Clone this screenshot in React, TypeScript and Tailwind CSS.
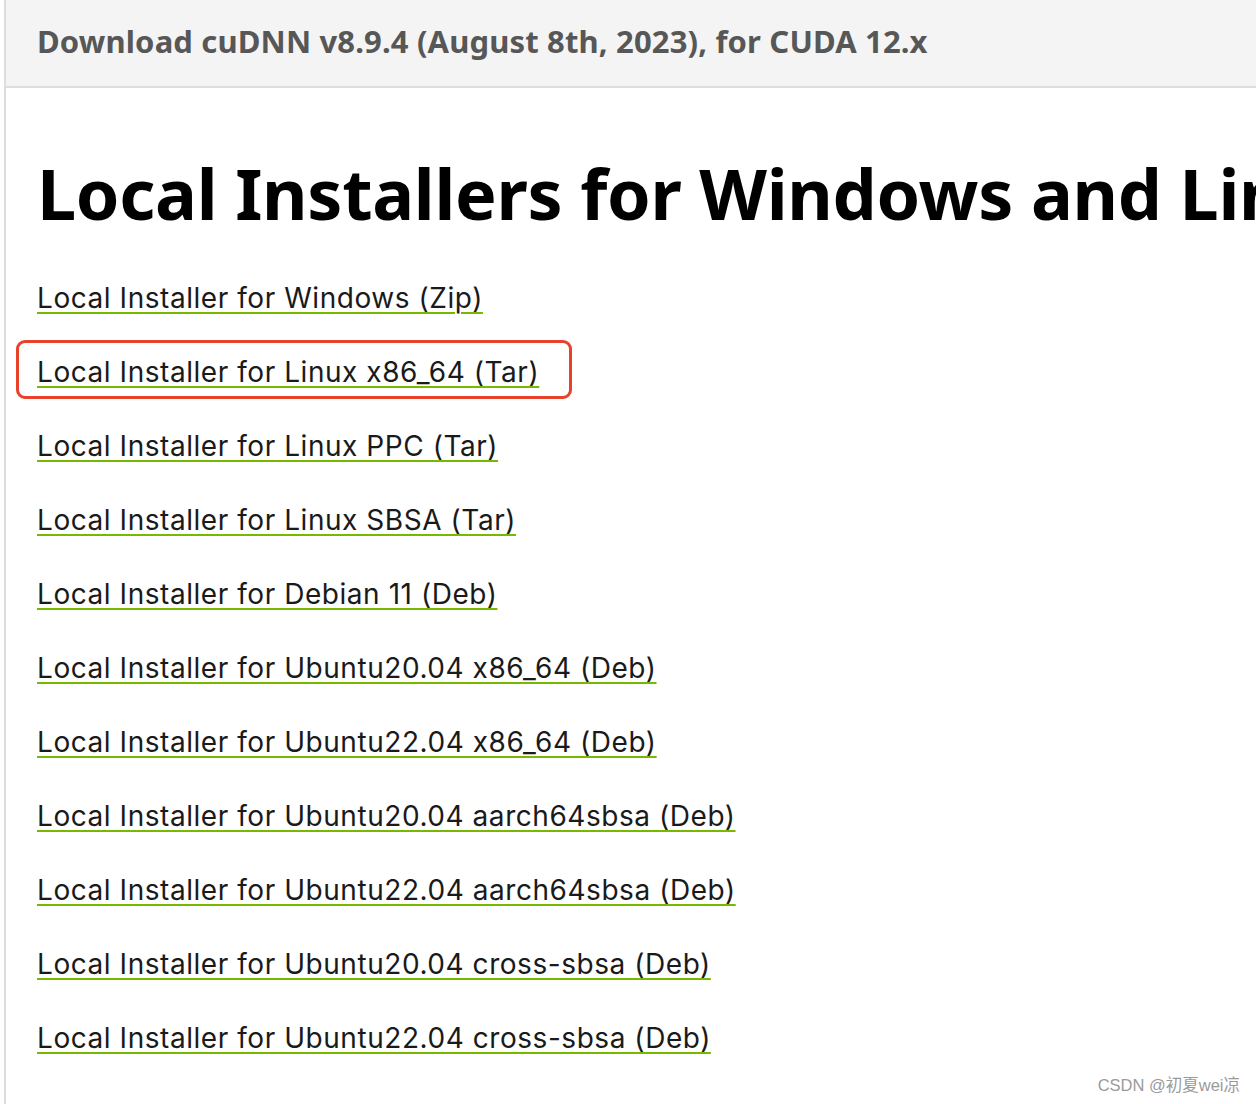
import React from "react";

const links = [
  "Local Installer for Windows (Zip)",
  "Local Installer for Linux x86_64 (Tar)",
  "Local Installer for Linux PPC (Tar)",
  "Local Installer for Linux SBSA (Tar)",
  "Local Installer for Debian 11 (Deb)",
  "Local Installer for Ubuntu20.04 x86_64 (Deb)",
  "Local Installer for Ubuntu22.04 x86_64 (Deb)",
  "Local Installer for Ubuntu20.04 aarch64sbsa (Deb)",
  "Local Installer for Ubuntu22.04 aarch64sbsa (Deb)",
  "Local Installer for Ubuntu20.04 cross-sbsa (Deb)",
  "Local Installer for Ubuntu22.04 cross-sbsa (Deb)",
];

export default function App() {
  return (
    <div className="relative w-[1256px] h-[1104px] overflow-hidden bg-white font-['Noto_Sans',sans-serif]">
      <div className="ml-[4px] h-full border-l-2 border-[#dddddd]">
        <div className="h-[88px] bg-[#f4f4f4] border-b-2 border-[#dddddd] pl-[31px] flex items-center">
          <span className="text-[31px] font-bold text-[#575757] whitespace-nowrap leading-none pb-[3px] tracking-[0.15px]">
            Download cuDNN v8.9.4 (August 8th, 2023), for CUDA 12.x
          </span>
        </div>
        <div className="pl-[31px]">
          <h1 className="mt-[70px] text-[70px] font-bold text-black leading-none whitespace-nowrap tracking-[-0.3px]">
            Local Installers for Windows and Linux, Ubuntu(x86_64, armsbsa)
          </h1>
          <div className="mt-[33px] flex flex-col">
            {links.map((l, i) => (
              <div key={i} className="relative h-[74px] flex items-center">
                {i === 1 && (
                  <span className="absolute left-[-21px] top-[5px] w-[556px] h-[59px] border-[3.5px] border-[#e8412c] rounded-[9px]" />
                )}
                <a
                  href="#"
                  className="font-['Inter',sans-serif] [font-feature-settings:'calt'_0] text-[28px] tracking-[0.55px] text-[#1a1a1a] whitespace-nowrap leading-none underline decoration-[#76b900] decoration-2 underline-offset-[4px]"
                >
                  {l}
                </a>
              </div>
            ))}
          </div>
        </div>
      </div>
      <div className="absolute right-[16px] bottom-[6px] text-[16.5px] text-[#9a9a9a] font-['Liberation_Sans','Noto_Sans_CJK_SC',sans-serif]">
        CSDN @初夏wei凉
      </div>
    </div>
  );
}
